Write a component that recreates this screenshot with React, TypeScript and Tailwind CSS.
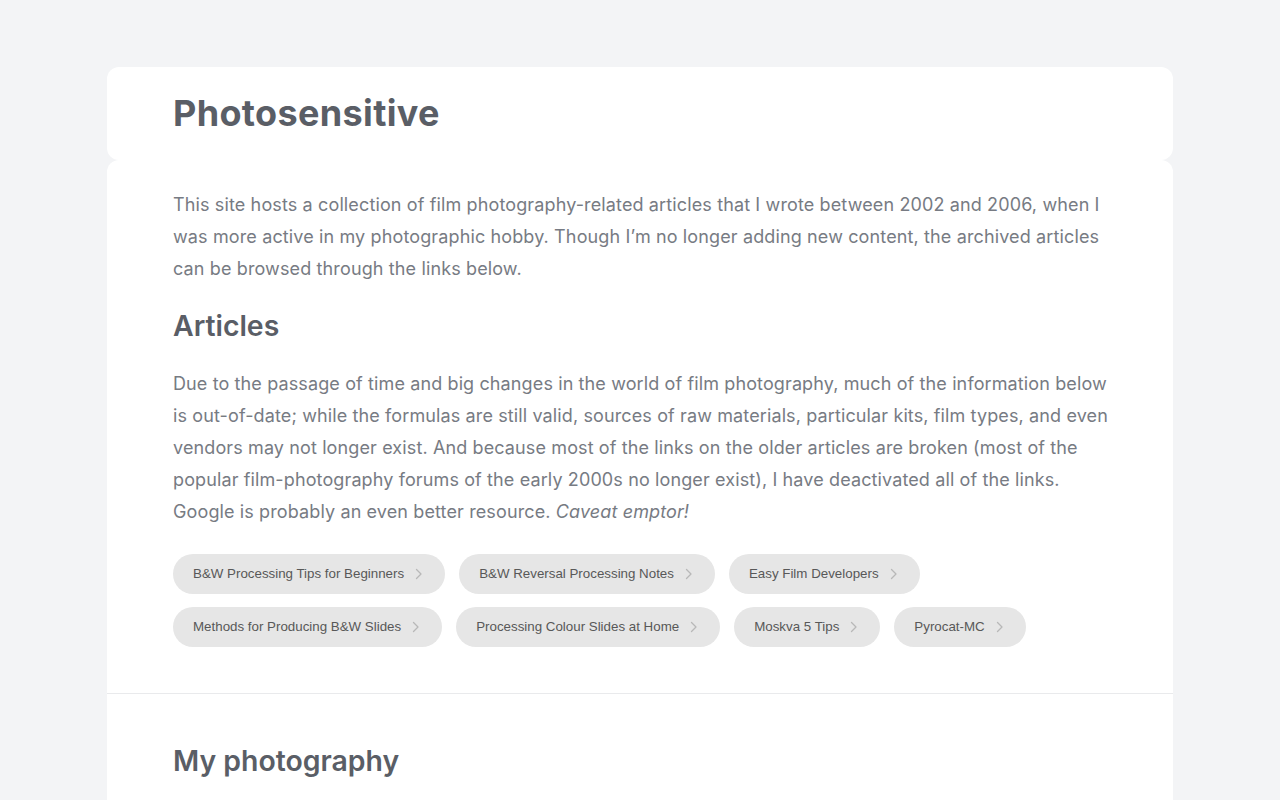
const articles = [
    ['B&W Processing Tips for Beginners', 'B&W Reversal Processing Notes', 'Easy Film Developers'],
    ['Methods for Producing B&W Slides', 'Processing Colour Slides at Home', 'Moskva 5 Tips', 'Pyrocat-MC'],
];

function Chevron() {
    return (
        <svg width="8" height="12" viewBox="0 0 8 12" fill="none" className="shrink-0">
            <path d="M1.5 1.5 L6 6 L1.5 10.5" stroke="#b8b8b8" strokeWidth="1.3" strokeLinecap="round" strokeLinejoin="round" />
        </svg>
    );
}

function Pill({ label }: { label: string }) {
    return (
        <a
            href="#"
            className="flex items-center gap-[11px] h-10 pl-5 pr-[22px] rounded-full bg-[#e6e6e6] text-[13.33px] text-[#585858] font-['Liberation_Sans',Arial,sans-serif]"
        >
            {label}
            <Chevron />
        </a>
    );
}

export default function App() {
    return (
        <div className="min-h-screen bg-[#f3f4f6] pt-[67px] font-['Inter',sans-serif]">
            <div className="max-w-[1066px] mx-auto">
                <header className="bg-white rounded-xl px-[66px] pt-[26px] pb-[27px]">
                    <h1 className="text-4xl leading-10 font-bold tracking-[0.35px] text-[#5a5e66]">Photosensitive</h1>
                </header>

                <main className="bg-white rounded-t-xl pl-[66px] pr-[56px] pt-[29px] pb-[46px]">
                    <p className="text-lg leading-8 tracking-[0.13px] text-[#777b83]">
                        This site hosts a collection of film photography-related articles that I wrote between 2002 and 2006, when I
                        was more active in my photographic hobby. Though I’m no longer adding new content, the archived articles
                        can be browsed through the links below.
                    </p>

                    <h2 className="mt-[23px] text-[28.4px] leading-9 font-semibold text-[#5a5e66]">Articles</h2>

                    <p className="mt-6 text-lg leading-8 tracking-[0.12px] text-[#777b83]">
                        Due to the passage of time and big changes in the world of film photography, much of the information below
                        is out-of-date; while the formulas are still valid, sources of raw materials, particular kits, film types, and even
                        vendors may not longer exist. And because most of the links on the older articles are broken (most of the
                        popular film-photography forums of the early 2000s no longer exist), I have deactivated all of the links.
                        Google is probably an even better resource. <em>Caveat emptor!</em>
                    </p>

                    <div className="mt-[26px] flex flex-col gap-[13px]">
                        {articles.map((row, i) => (
                            <div key={i} className="flex flex-wrap gap-[14px]">
                                {row.map(a => (
                                    <Pill key={a} label={a} />
                                ))}
                            </div>
                        ))}
                    </div>
                </main>

                <section className="bg-white border-t border-[#e9eaec] px-[66px] pt-[49px] pb-12">
                    <h2 className="text-[28.4px] leading-9 font-semibold text-[#5a5e66]">My photography</h2>
                    <p className="mt-6 text-lg leading-8 tracking-[0.13px] text-[#777b83]">
                        A selection of my own film photographs from the same period.
                    </p>
                </section>
            </div>
        </div>
    );
}
